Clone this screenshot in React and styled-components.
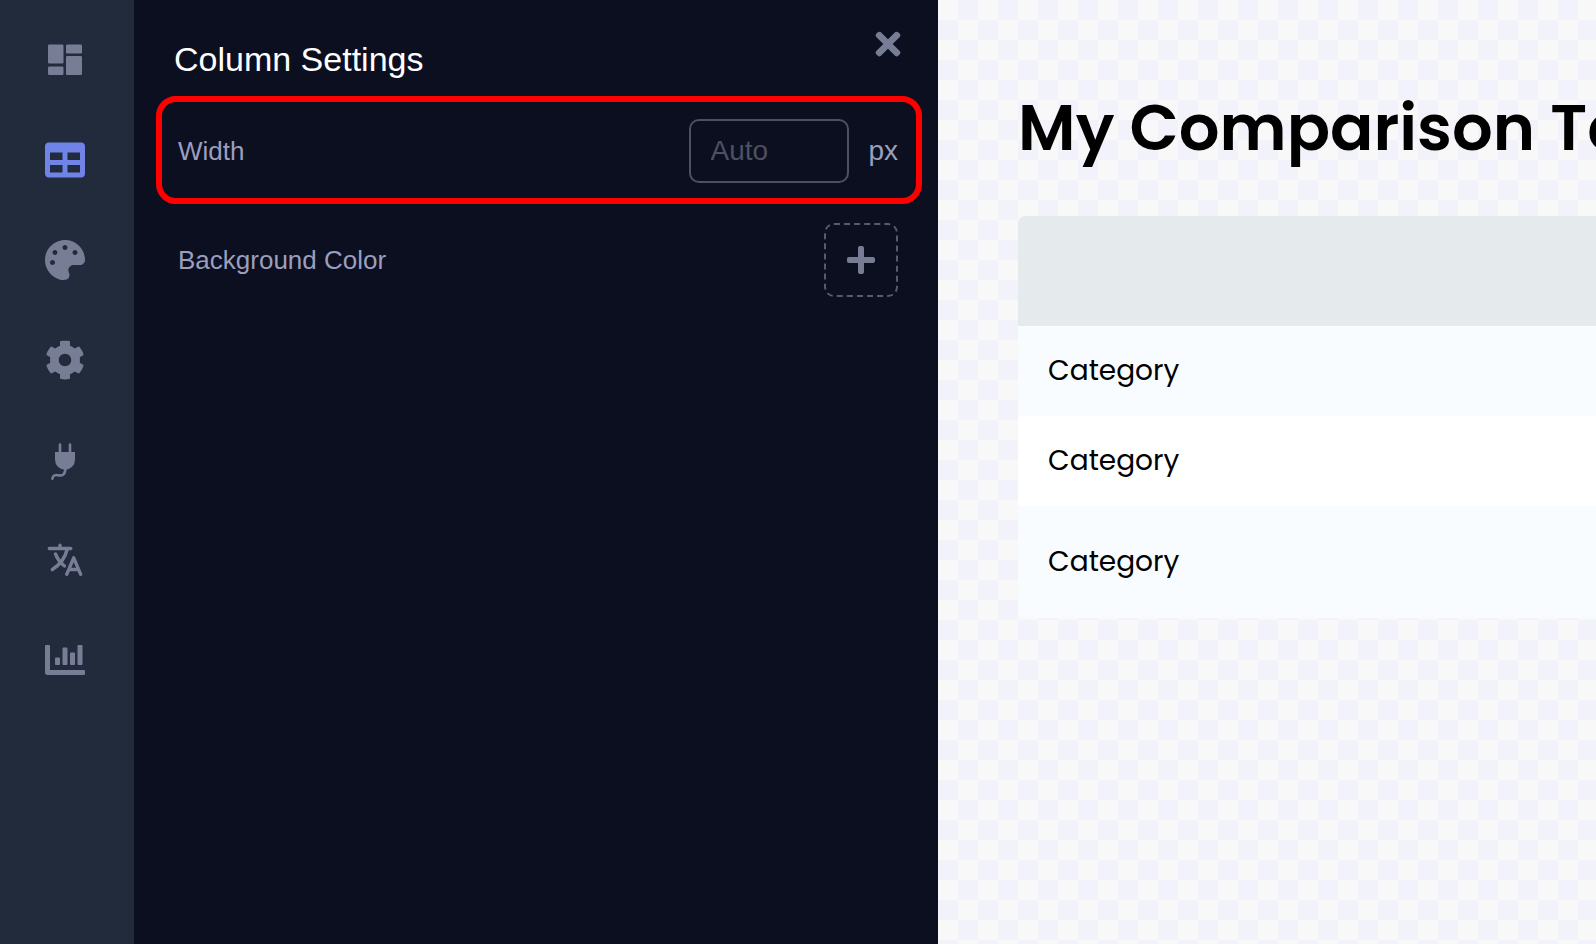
import React from "react";
import styled, { createGlobalStyle } from "styled-components";
import { FaTable, FaPalette, FaCog, FaChartBar, FaTimes, FaPlus } from "react-icons/fa";

const GlobalStyle = createGlobalStyle`
  *, *::before, *::after { box-sizing: border-box; }
  body {
    margin: 0;
    background: #0c0f1f;
    font-family: "Helvetica Neue", "Liberation Sans", Arial, sans-serif;
  }
`;

const Layout = styled.div`
  display: grid;
  grid-template-columns: 134px minmax(0, 11fr) minmax(0, 9fr);
  min-height: 100vh;
`;

const Sidebar = styled.nav`
  display: flex;
  flex-direction: column;
  padding: 10px 4px 0 0;
  background: #222b3b;
`;

const NavButton = styled.button`
  display: flex;
  align-items: center;
  justify-content: center;
  height: 100px;
  padding: 0;
  border: 0;
  background: none;
  color: ${(p) => (p.$active ? "#6f84e6" : "#787d96")};
  font-size: 40px;
  cursor: pointer;
`;

const Panel = styled.section`
  display: flex;
  flex-direction: column;
  padding: 0 16px 0 22px;
  background: #0c0f1f;
`;

const PanelHeader = styled.header`
  display: flex;
  align-items: flex-start;
  justify-content: space-between;
  height: 96px;
  padding: 26px 16px 0 18px;
`;

const PanelTitle = styled.h2`
  margin: 0;
  padding-top: 13px;
  color: #fff;
  font-size: 34px;
  font-weight: 400;
  line-height: 40px;
`;

const CloseButton = styled.button`
  display: flex;
  align-items: center;
  justify-content: center;
  width: 36px;
  height: 36px;
  padding: 0;
  border: 0;
  background: none;
  color: #787d96;
  font-size: 36px;
  cursor: pointer;
`;

const Settings = styled.div`
  display: flex;
  flex-direction: column;
  gap: 1px;
`;

const SettingRow = styled.div`
  display: flex;
  align-items: center;
  justify-content: space-between;
  height: 108px;
  padding: 2px 18px 0 16px;
  border: 6px solid ${(p) => (p.$highlighted ? "#ff0000" : "transparent")};
  border-radius: 20px;
`;

const SettingLabel = styled.label`
  color: #9a9ebf;
  font-size: 26px;
  line-height: 32px;
`;

const Field = styled.div`
  display: flex;
  align-items: center;
  gap: 20px;
  color: #9a9ebf;
  font-size: 28px;
`;

const NumberInput = styled.input`
  width: 160px;
  height: 64px;
  padding: 0 20px;
  border: 2px solid #4d5063;
  border-radius: 10px;
  background: transparent;
  color: #9a9ebf;
  font: inherit;

  &::placeholder {
    color: #4d5063;
    opacity: 1;
  }
`;

const AddColorButton = styled.button`
  display: flex;
  align-items: center;
  justify-content: center;
  width: 74px;
  height: 74px;
  padding: 0;
  border: 2px dashed #585b6e;
  border-radius: 10px;
  background: none;
  color: #787d96;
  font-size: 32px;
  cursor: pointer;
`;

const Preview = styled.main`
  padding: 80px 0 80px 80px;
  overflow: hidden;
  background: repeating-conic-gradient(#f2f2fb 0 25%, #f8f8f8 0 50%) 0 0 / 40px 40px;
  color: #000;
  font-family: Poppins, Inter, "Open Sans", sans-serif;
`;

const PreviewTitle = styled.h1`
  margin: 0 0 40px;
  font-size: 64px;
  font-weight: 600;
  line-height: 96px;
  white-space: nowrap;
`;

const ComparisonTable = styled.table`
  width: 100%;
  border-collapse: separate;
  border-spacing: 0;
  border-radius: 8px 0 0 8px;
  overflow: hidden;
  background: #fff;
`;

const HeadCell = styled.th`
  height: 110px;
  background: #e5eaed;
`;

const CategoryCell = styled.th`
  height: ${(p) => (p.$tall ? 112 : 90)}px;
  padding: 0 30px;
  background: ${(p) => (p.$tinted ? "#f8fcff" : "#fff")};
  font-size: 28px;
  font-weight: 400;
  line-height: 42px;
  text-align: left;
`;

const DashboardIcon = () => (
  <svg width="34" height="32" viewBox="0 0 34 32" fill="currentColor" aria-hidden="true">
    <rect x="0" y="0.5" width="15.500" height="19" rx="1.2" />
    <rect x="0" y="22.5" width="15.500" height="8.500" rx="1.2" />
    <rect x="18" y="0.5" width="16" height="9" rx="1.2" />
    <rect x="18" y="12" width="16" height="19" rx="1.2" />
  </svg>
);

const PlugIcon = () => (
  <svg width="40" height="40" viewBox="0 0 40 40" fill="none" aria-hidden="true">
    <path d="M15 4.500v9M25 4.500v9" stroke="currentColor" strokeWidth="2.6" strokeLinecap="round" />
    <path d="M10 12h20v7.700a10 10 0 0 1-20 0z" fill="currentColor" />
    <path
      d="M20.500 29c-.5 4.500-2 7.200-6.500 6.400-3.500-.8-6.200-.4-6.600 3.200"
      stroke="currentColor"
      strokeWidth="2.6"
      strokeLinecap="round"
    />
  </svg>
);

const TranslateIcon = () => (
  <svg width="40" height="40" viewBox="0 0 40 40" fill="none" stroke="currentColor" strokeWidth="3.4" strokeLinecap="round" strokeLinejoin="round" aria-hidden="true">
    <path d="M4.300 8.500h21.500M15 5.200v3M22.300 9c-2 8.500-7 15.500-15 20.500M10.500 14c2 5 5 9 9 12" />
    <path d="M21.700 34.300l7-16.500 7 16.500M24.200 29.500h9.500" />
  </svg>
);

const NAV_ITEMS = [
  { label: "Dashboard", Icon: DashboardIcon },
  { label: "Table", Icon: FaTable, active: true },
  { label: "Theme", Icon: FaPalette },
  { label: "Settings", Icon: FaCog },
  { label: "Integrations", Icon: PlugIcon },
  { label: "Translations", Icon: TranslateIcon },
  { label: "Analytics", Icon: FaChartBar },
];

const ROWS = [
  { id: 1, name: "Category", tinted: true },
  { id: 2, name: "Category" },
  { id: 3, name: "Category", tinted: true, tall: true },
];

export default function App() {
  return (
    <>
      <GlobalStyle />
      <Layout>
        <Sidebar>
          {NAV_ITEMS.map(({ label, Icon, active }) => (
            <NavButton key={label} type="button" aria-label={label} $active={active}>
              <Icon />
            </NavButton>
          ))}
        </Sidebar>

        <Panel>
          <PanelHeader>
            <PanelTitle>Column Settings</PanelTitle>
            <CloseButton type="button" aria-label="Close">
              <FaTimes />
            </CloseButton>
          </PanelHeader>
          <Settings>
            <SettingRow $highlighted>
              <SettingLabel htmlFor="column-width">Width</SettingLabel>
              <Field>
                <NumberInput id="column-width" type="text" inputMode="numeric" placeholder="Auto" />
                <span>px</span>
              </Field>
            </SettingRow>
            <SettingRow>
              <SettingLabel htmlFor="column-background">Background Color</SettingLabel>
              <AddColorButton id="column-background" type="button">
                <FaPlus />
              </AddColorButton>
            </SettingRow>
          </Settings>
        </Panel>

        <Preview>
          <PreviewTitle>My Comparison Table</PreviewTitle>
          <ComparisonTable>
            <thead>
              <tr>
                <HeadCell />
              </tr>
            </thead>
            <tbody>
              {ROWS.map((row) => (
                <tr key={row.id}>
                  <CategoryCell scope="row" $tinted={row.tinted} $tall={row.tall}>
                    {row.name}
                  </CategoryCell>
                </tr>
              ))}
            </tbody>
          </ComparisonTable>
        </Preview>
      </Layout>
    </>
  );
}
